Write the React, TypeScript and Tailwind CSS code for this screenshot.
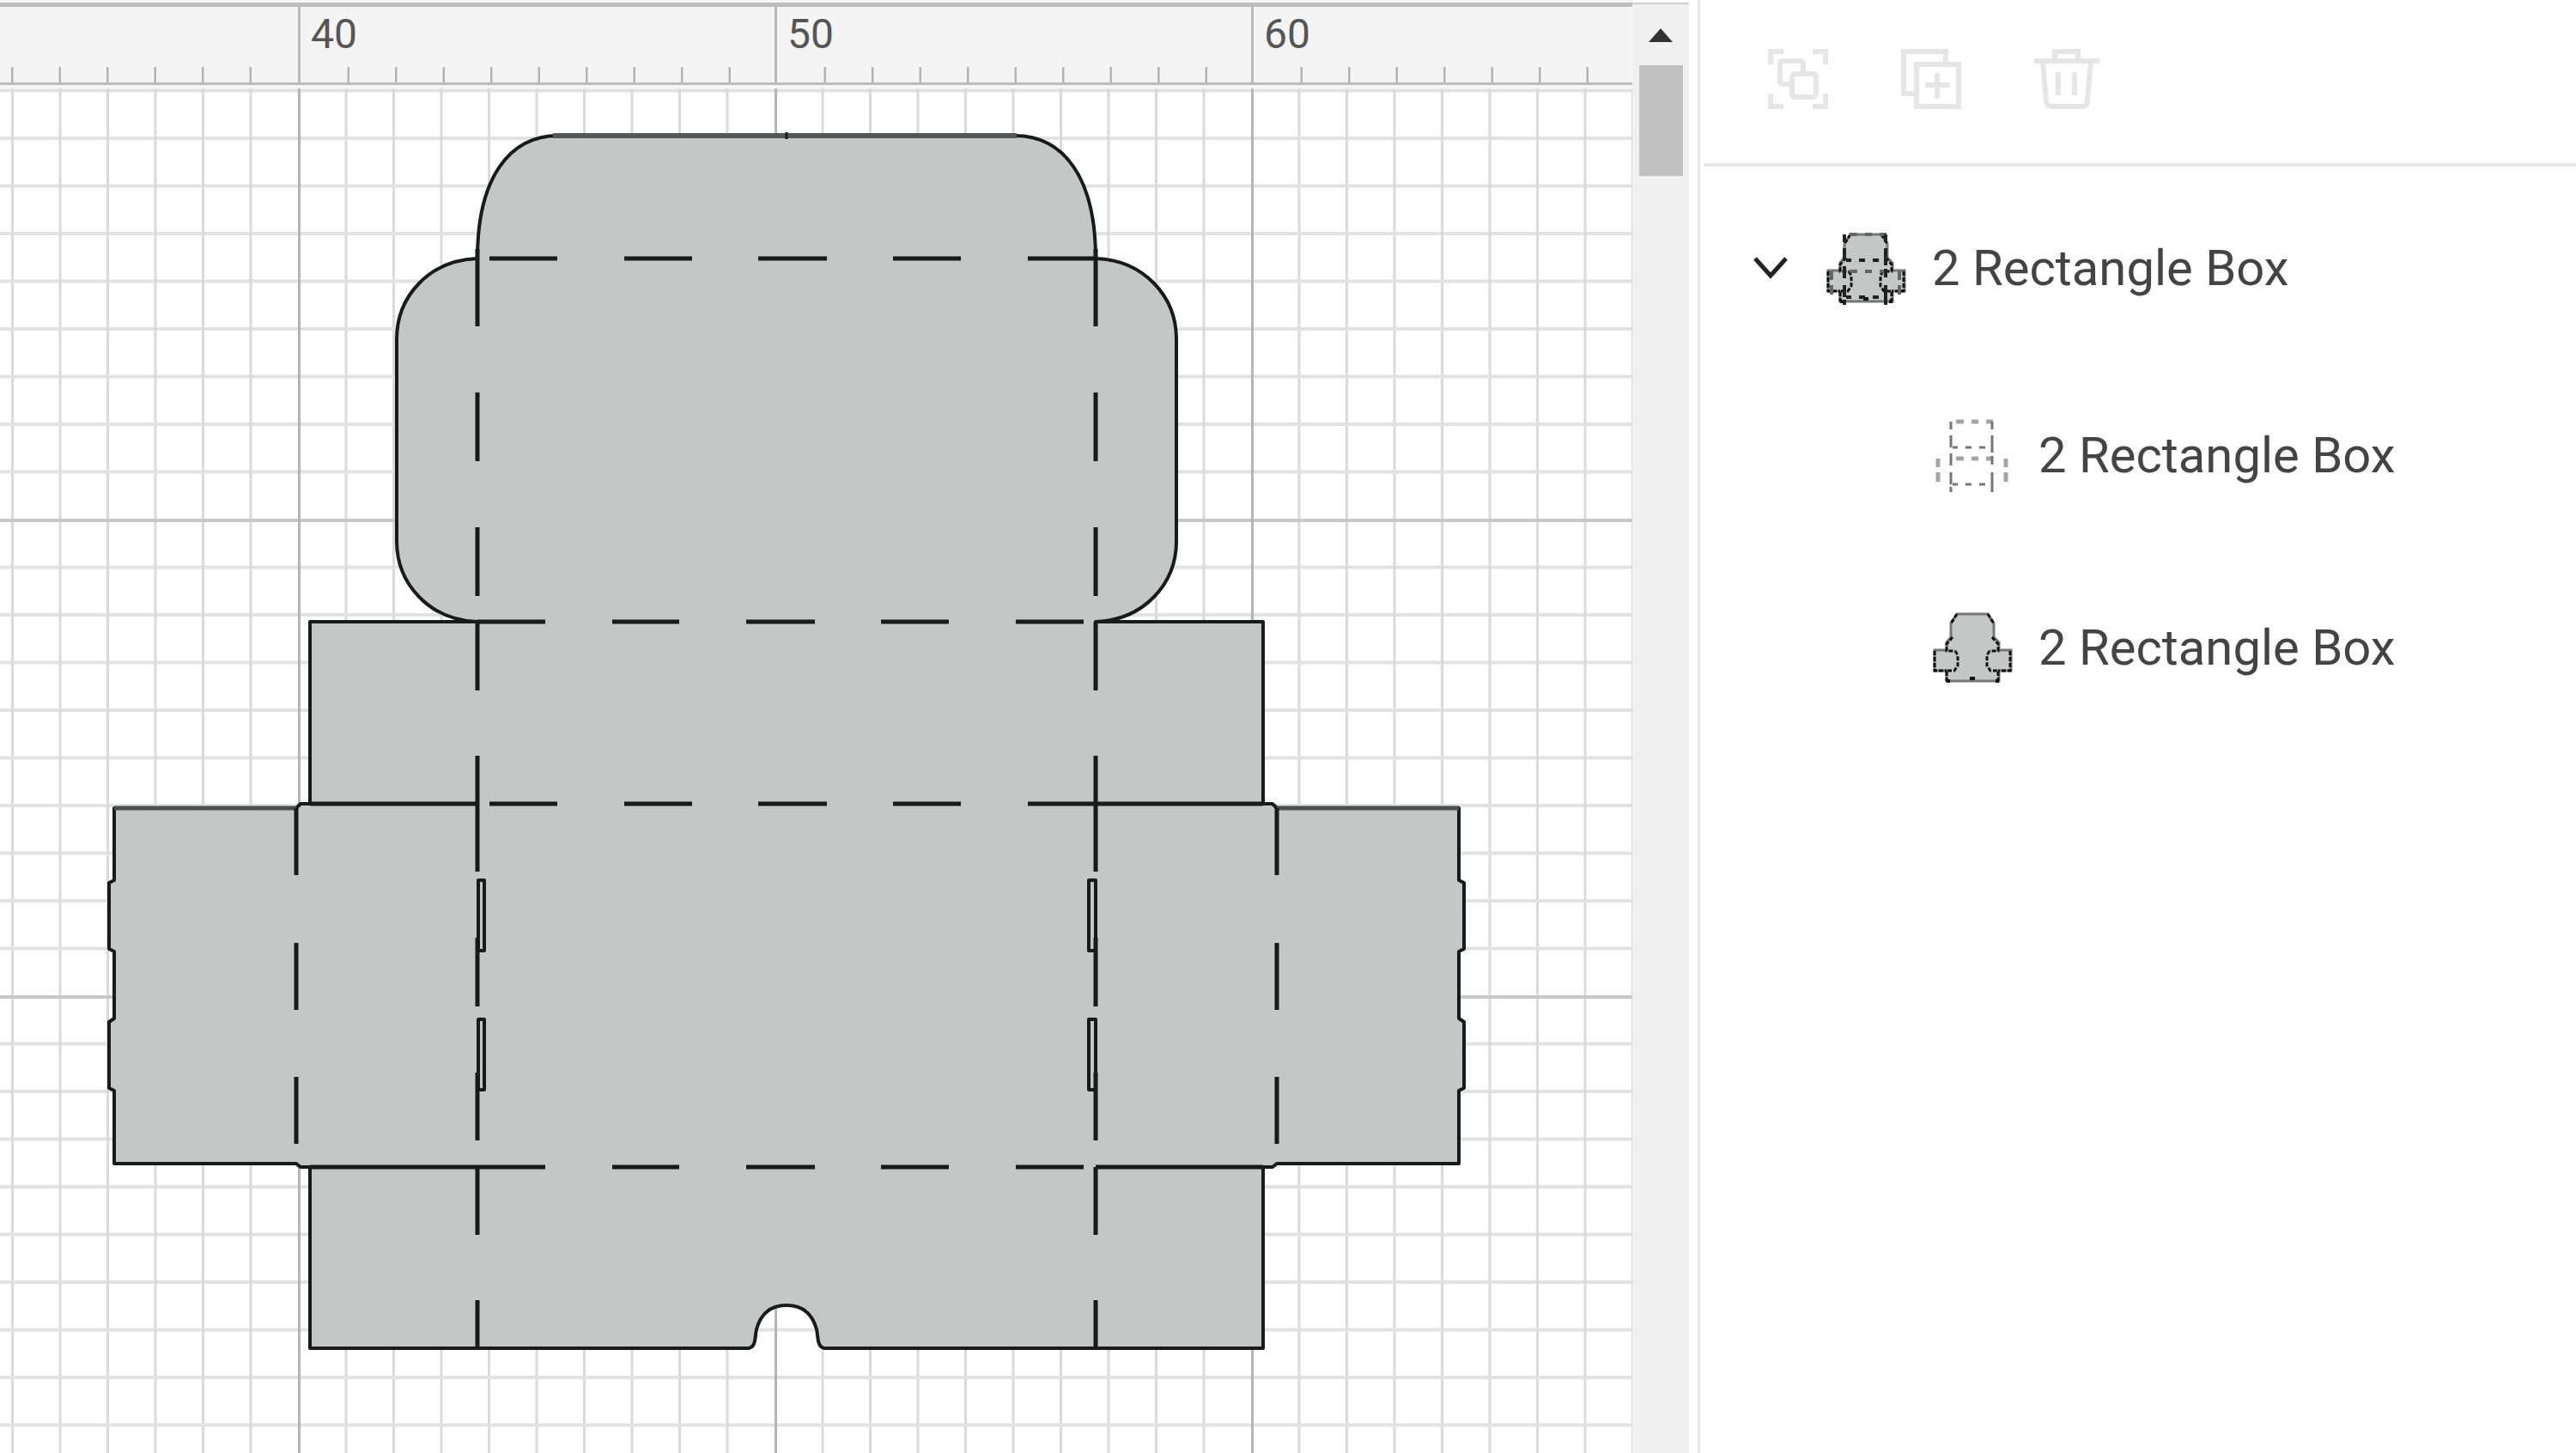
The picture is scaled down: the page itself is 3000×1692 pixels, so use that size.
import { useState } from "react";

const UNITS = [40, 50, 60];
const MINOR = [1, 2, 3, 4, 5, 6, 7, 8, 9];

const OUTLINE =
  "M556 301 C556 206 594 158 650 158 H1182 C1238 158 1276 206 1276 301 " +
  "C1332 303 1370 345 1370 395 V630 C1370 680 1332 722 1276 724 H1471 V936 H1482 L1487 941 H1699 " +
  "V1025 L1705 1028 V1105 L1699 1108 V1186 L1705 1190 V1267 L1699 1270 V1355 H1487 L1482 1359 H1471 V1570 H960 " +
  "C951 1568 953 1556 951 1548 C946 1530 934 1520 916 1520 C898 1520 886 1530 881 1548 C879 1556 881 1568 872 1570 " +
  "H361 V1359 H350 L345 1355 H133 V1270 L127 1267 V1190 L133 1186 V1108 L127 1105 V1028 L133 1025 " +
  "V941 H345 L350 936 H361 V724 H556 C500 722 462 680 462 630 V395 C462 345 500 303 556 301 Z";

const FOLDS_H =
  "M570 301h79M727 301h79M883 301h80M1040 301h79M1197 301h79" +
  "M556 724h79M713 724h78M869 724h80M1026 724h79M1183 724h79" +
  "M570 936h79M727 936h79M883 936h80M1040 936h79M1197 936h79" +
  "M556 1359h79M713 1359h78M869 1359h80M1026 1359h79M1183 1359h79" +
  "M361 936h195M361 1359h195M1276 936h195M1276 1359h195";

const FOLDS_V =
  "M556 290v90M556 457v80M556 614v80M556 724v80M556 880v135M556 1092v80M556 1249v79M556 1359v79M556 1514v56" +
  "M1276 290v90M1276 457v80M1276 614v80M1276 724v80M1276 880v135M1276 1092v80M1276 1249v79M1276 1359v79M1276 1514v56" +
  "M345 941v78M345 1098v78M345 1254v78M1487 941v78M1487 1098v78M1487 1254v78";

function TickMarks() {
  return (
    <svg width="555" height="18" className="shrink-0" aria-hidden>
      {MINOR.map((n) => (
        <rect key={n} x={n * 55.5 - 1} y="0" width="2.5" height="18" fill="#b3b3b3" />
      ))}
    </svg>
  );
}

function Ruler() {
  return (
    <div className="flex h-24 shrink-0 overflow-hidden border-t-[5px] border-b-[3px] border-[#bcbcbc] bg-[#f4f4f4]">
      <div className="flex w-[347px] shrink-0 items-end justify-end overflow-hidden">
        <TickMarks />
      </div>
      {UNITS.map((unit) => (
        <div
          key={unit}
          className="flex w-[555px] shrink-0 flex-col justify-between border-l-[3px] border-[#b8b8b8]"
        >
          <span className="pt-2 pl-3 font-[Roboto,sans-serif] text-[48px] leading-[48px] text-[#555]">
            {unit}
          </span>
          <TickMarks />
        </div>
      ))}
    </div>
  );
}

function Mat() {
  return (
    <svg className="block w-full flex-1 bg-white" role="img" aria-label="Rectangle box template">
      <defs>
        {/* one 10-unit square of the cutting mat */}
        <pattern id="mat" x="347" y="505" width="555" height="555" patternUnits="userSpaceOnUse">
          {MINOR.map((n) => (
            <g key={n}>
              <rect x="0" y={n * 55.5 - 1} width="555" height="4" fill="#e2e2e2" />
              <rect x={n * 55.5 - 1} y="0" width="3" height="555" fill="#dadada" />
            </g>
          ))}
          <rect x="0" y="0" width="555" height="4" fill="#c8c8c8" />
          <rect x="0" y="0" width="3" height="555" fill="#b4b4b4" />
        </pattern>
      </defs>
      <rect width="100%" height="100%" fill="url(#mat)" />
      <rect width="100%" height="4" fill="#f6f6f6" />
      <g transform="translate(0 -99)" fill="none" stroke="#191a1a">
        <path d={OUTLINE} fill="#c5c7c6" strokeWidth="4" strokeLinejoin="round" />
        <path d="M644 158H1184" stroke="#555857" strokeWidth="6" />
        <path d="M133 941H345M1487 941H1699" stroke="#4c4f4e" strokeWidth="5" />
        <path d="M916 154v8" strokeWidth="3" />
        <path d={FOLDS_H} strokeWidth="5" />
        <path d={FOLDS_V} strokeWidth="5" />
        <path
          d="M557 1025h7v82h-7zM557 1187h7v82h-7zM1268 1025h8v82h-8zM1268 1187h8v82h-8z"
          strokeWidth="4"
          strokeLinejoin="round"
        />
      </g>
    </svg>
  );
}

function ScrollBar() {
  return (
    <div className="mt-[3px] flex w-[66px] shrink-0 flex-col items-center border-t-2 border-[#cfcfcf] bg-[#f0f0f0]">
      <button type="button" aria-label="Scroll up" className="flex h-[71px] w-full items-center justify-center">
        <svg width="30" height="18" viewBox="0 0 30 18" aria-hidden>
          <path d="M15 1L29 17H1z" fill="#333" />
        </svg>
      </button>
      <div className="h-[129px] w-[51px] bg-[#c1c1c1]" />
    </div>
  );
}

type ThumbProps = { body?: boolean; folds?: boolean };

function Thumb({ body, folds }: ThumbProps) {
  return (
    <svg width="94" height="86" viewBox="0 0 94 86" fill="none" className="shrink-0" aria-hidden>
      {body && (
        <>
          <path
            d="M29 4H65L72 15V31L78 37V46H92V70H78V82H17V70H3V46H17V37L22 31V15Z"
            fill="#c5c7c6"
            stroke="#777"
            strokeWidth="3"
          />
          <path
            d="M29 4L22 15M65 4L72 15M24 31L17 39V47H27M70 31L77 39V47H67M3 47V70H17M27 47L30 52V64L26 70H17V82M91 47V70H77M67 47L64 52V64L68 70H77V82"
            stroke="#111"
            strokeWidth="3"
            strokeDasharray="5 2"
          />
          <path d="M44 79h6M17 82h4M74 82h4" stroke="#111" strokeWidth="4" />
        </>
      )}
      {folds && (
        <>
          <path
            d="M28 4h9M46 4h8M63 4h8M28 47h9M46 47h8M63 47h8M7 47v10M7 63v11M86 47v10M86 63v11"
            stroke={body ? "#666" : "#a5a5a5"}
            strokeWidth={body ? 4 : 5}
          />
          <path
            d="M22 4v9M22 20v14M22 41v14M22 63v14M22 80v6M70 4v9M70 20v20M70 44v10M70 63v23M24 34h6M39 34h7M55 34h7M24 77h6M39 77h7M55 77h7"
            stroke={body ? "#222" : "#757575"}
            strokeWidth={body ? 4 : 3}
          />
        </>
      )}
    </svg>
  );
}

function GroupIcon() {
  return (
    <svg width="70" height="70" viewBox="0 0 70 70" fill="none" stroke="currentColor" strokeWidth="6" aria-hidden>
      <path d="M3 18V3H18M52 3H67V18M67 52V67H52M18 67H3V52" />
      <path d="M27 41H18Q14 41 14 37V18Q14 14 18 14H37Q41 14 41 18V28" />
      <rect x="28" y="29" width="28" height="27" rx="4" />
    </svg>
  );
}

function DuplicateIcon() {
  return (
    <svg width="70" height="70" viewBox="0 0 70 70" fill="none" stroke="currentColor" strokeWidth="6" aria-hidden>
      <path d="M17 52H3V3H52V17" />
      <rect x="18" y="18" width="49" height="49" />
      <path d="M42 28V58M28 42H57" />
    </svg>
  );
}

function TrashIcon() {
  return (
    <svg width="76" height="70" viewBox="0 0 76 70" fill="none" stroke="currentColor" strokeWidth="6" aria-hidden>
      <path d="M0 14H76M24 14V3H51V14" />
      <path d="M10 14L14 61Q15 67 21 67H55Q61 67 62 61L66 14M28 27V54M47 27V54" />
    </svg>
  );
}

const LABEL = "font-[Roboto,sans-serif] text-[58px] leading-[64px] whitespace-nowrap text-[#444]";

function LayersPanel() {
  const [open, setOpen] = useState(true);

  return (
    <aside className="w-[34%] shrink-0 overflow-hidden pl-1">
      <div className="flex h-[194px] items-start gap-[85px] border-b-4 border-[#e8e8e8] pt-[57px] pl-[75px] text-[#e6e6e6]">
        <button type="button" aria-label="Group">
          <GroupIcon />
        </button>
        <button type="button" aria-label="Duplicate">
          <DuplicateIcon />
        </button>
        <button type="button" aria-label="Delete">
          <TrashIcon />
        </button>
      </div>

      <ul className="pt-3">
        <li>
          <div className="flex h-[212px] items-center pl-[58px]">
            <button type="button" aria-label="Toggle group" aria-expanded={open} onClick={() => setOpen(!open)}>
              <svg width="40" height="26" viewBox="0 0 40 26" fill="none" className={open ? "" : "-rotate-90"} aria-hidden>
                <path d="M2 2L20 22L38 2" stroke="#222" strokeWidth="5" />
              </svg>
            </button>
            <span className="flex items-center gap-[30px] pl-11">
              <Thumb body folds />
              <span className={LABEL}>2 Rectangle Box</span>
            </span>
          </div>
          {open && (
            <ul>
              <li className="flex h-[224px] items-center gap-[30px] pl-[266px]">
                <Thumb folds />
                <span className={LABEL}>2 Rectangle Box</span>
              </li>
              <li className="flex h-[224px] items-center gap-[30px] pl-[266px]">
                <Thumb body />
                <span className={LABEL}>2 Rectangle Box</span>
              </li>
            </ul>
          )}
        </li>
      </ul>
    </aside>
  );
}

export default function App() {
  return (
    <div className="flex min-h-screen bg-white">
      <main className="flex min-w-0 flex-1 border-r-[3px] border-[#e6e6e6] pr-[10px]">
        <div className="flex min-w-0 flex-1 flex-col border-t-[3px] border-[#f4f4f4]">
          <Ruler />
          <Mat />
        </div>
        <ScrollBar />
      </main>
      <LayersPanel />
    </div>
  );
}
